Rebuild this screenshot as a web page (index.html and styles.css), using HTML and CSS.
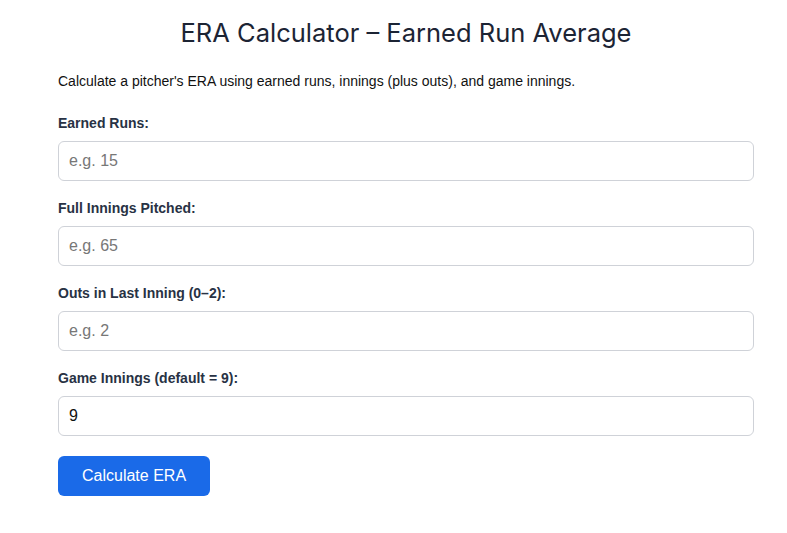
FILE: index.html
```html
<!DOCTYPE html>
<html lang="en">
<head>
  <meta charset="UTF-8" />
  <meta name="viewport" content="width=device-width, initial-scale=1.0"/>
  <title>ERA Calculator</title>
  <link rel="stylesheet" href="styles.css">
</head>
<body>
  <main class="calc">
    <h1>ERA Calculator – Earned Run Average</h1>
    <p class="intro">Calculate a pitcher's ERA using earned runs, innings (plus outs), and game innings.</p>

    <label for="earnedRuns">Earned Runs:</label>
    <input type="number" id="earnedRuns" placeholder="e.g. 15" />

    <label for="innings">Full Innings Pitched:</label>
    <input type="number" id="innings" placeholder="e.g. 65" />

    <label for="outs">Outs in Last Inning (0–2):</label>
    <input type="number" id="outs" placeholder="e.g. 2" />

    <label for="gameInnings">Game Innings (default = 9):</label>
    <input type="number" id="gameInnings" value="9" />

    <button class="calc-btn">Calculate ERA</button>
  </main>
</body>
</html>
```

FILE: styles.css
```css
body {
  margin: 0;
  padding: 0;
  background: #fff;
  font-family: 'Liberation Sans', Arial, sans-serif;
  color: #111;
}

.calc {
  width: 696px;
  margin-left: 58px;
  padding-top: 14px;
}

h1 {
  font-family: Inter, 'Noto Sans', sans-serif;
  font-weight: 400;
  font-size: 25.5px;
  line-height: 38px;
  color: #1c2434;
  text-align: center;
  margin: 0;
}

.intro {
  font-size: 14px;
  line-height: 16px;
  margin: 21px 0 26px;
}

label {
  display: block;
  font-size: 14px;
  font-weight: bold;
  line-height: 16px;
  color: #283244;
  margin-bottom: 10px;
}

input {
  display: block;
  box-sizing: border-box;
  width: 100%;
  height: 40px;
  margin: 0 0 19px;
  padding: 0 10px;
  border: 1px solid #cfd2d8;
  border-radius: 6px;
  font-family: 'Liberation Sans', Arial, sans-serif;
  font-size: 16px;
  color: #111;
}

input::placeholder {
  color: #777;
}

input::-webkit-outer-spin-button,
input::-webkit-inner-spin-button {
  -webkit-appearance: none;
  margin: 0;
}

.calc-btn {
  display: block;
  margin-top: 20px;
  height: 40px;
  padding: 0 24px;
  background-color: #1a6ae8;
  color: white;
  border: none;
  border-radius: 6px;
  font-family: 'Liberation Sans', Arial, sans-serif;
  font-size: 16px;
  cursor: pointer;
}

.calc-btn:hover {
  background-color: #1557c0;
}
```
